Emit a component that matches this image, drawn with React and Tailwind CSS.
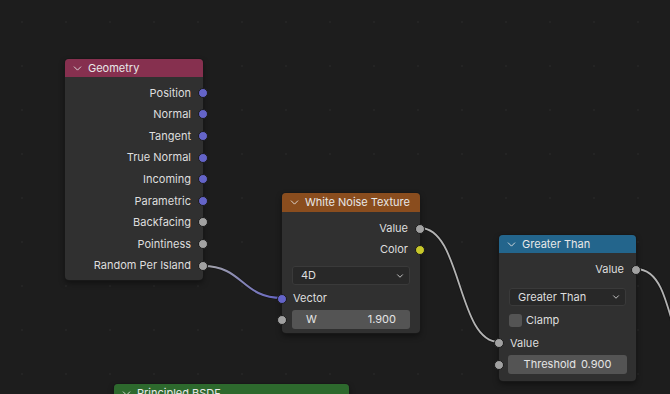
import { ChevronDown } from 'lucide-react'

const font = { fontFamily: 'Inter, "Noto Sans", sans-serif' }

const Socket = ({ side, color }) => (
  <span
    className={`absolute top-1/2 -translate-y-1/2 w-[10px] h-[10px] rounded-full border border-[#1a1a1a] ${side === 'right' ? 'right-[-5px]' : 'left-[-5px]'} ${color}`}
  />
)

const Row = ({ label, side = 'right', color = 'bg-[#a1a1a1]', h = 'h-[21.6px]' }) => (
  <div className={`relative flex items-center ${h} ${side === 'right' ? 'justify-end pr-[12px]' : 'justify-start pl-[11px]'}`}>
    <span>{label}</span>
    <Socket side={side} color={color} />
  </div>
)

const Header = ({ title, color }) => (
  <div className={`flex items-center gap-[4px] pl-[6px] rounded-t-[4px] text-[#e8e8e8] ${color}`}>
    <ChevronDown size={13} strokeWidth={1.6} className="text-[#e8e8e8]" />
    <span className="leading-none">{title}</span>
  </div>
)

const Dropdown = ({ value }) => (
  <div className="flex items-center justify-between h-full mx-[10px] pl-[8px] pr-[4px] rounded-[3px] bg-[#282828] border border-[#3a3a3a]">
    <span>{value}</span>
    <ChevronDown size={10} strokeWidth={2.2} className="text-[#cfcfcf]" />
  </div>
)

export default function App() {
  const purple = 'bg-[#6464c8]'
  const grey = 'bg-[#a1a1a1]'
  const yellow = 'bg-[#c7c72a]'

  return (
    <div
      className="relative w-[670px] h-[394px] overflow-hidden bg-[#1d1d1d] bg-[radial-gradient(circle,#242424_1px,transparent_1.5px)] bg-[size:44px_44px] text-[11px] text-[#dedede]"
      style={font}
    >
      <svg className="absolute inset-0" width="670" height="394">
        <defs>
          <linearGradient id="lk1" x1="203" y1="0" x2="282" y2="0" gradientUnits="userSpaceOnUse">
            <stop offset="0" stopColor="#a8a8a8" />
            <stop offset="1" stopColor="#6262c4" />
          </linearGradient>
        </defs>
        <g fill="none" strokeLinecap="round">
          <path d="M203 266 C 243 266, 242 298, 282 298" stroke="#151515" strokeWidth="3.5" />
          <path d="M203 266 C 243 266, 242 298, 282 298" stroke="url(#lk1)" strokeWidth="2" />
          <path d="M420 228 C 462 228, 457 342, 499 342" stroke="#151515" strokeWidth="3.5" />
          <path d="M420 228 C 462 228, 457 342, 499 342" stroke="#b3b3b3" strokeWidth="1.8" />
          <path d="M636 269 C 668 269, 668 320, 700 420" stroke="#151515" strokeWidth="3.5" />
          <path d="M636 269 C 668 269, 668 320, 700 420" stroke="#b3b3b3" strokeWidth="1.8" />
        </g>
      </svg>

      {/* Geometry */}
      <div className="absolute left-[65px] top-[59px] w-[138px] rounded-[4px] bg-[#303030] shadow-[0_0_0_1px_#181818,0_3px_6px_rgba(0,0,0,0.45)]">
        <div className="h-[18px] flex">
          <Header title="Geometry" color="bg-[#86304f] w-full" />
        </div>
        <div className="pt-[5px] pb-[4px]">
          <Row label="Position" color={purple} />
          <Row label="Normal" color={purple} />
          <Row label="Tangent" color={purple} />
          <Row label="True Normal" color={purple} />
          <Row label="Incoming" color={purple} />
          <Row label="Parametric" color={purple} />
          <Row label="Backfacing" color={grey} />
          <Row label="Pointiness" color={grey} />
          <Row label="Random Per Island" color={grey} />
        </div>
      </div>

      {/* White Noise Texture */}
      <div className="absolute left-[282px] top-[193px] w-[138px] rounded-[4px] bg-[#303030] shadow-[0_0_0_1px_#181818,0_3px_6px_rgba(0,0,0,0.45)]">
        <div className="h-[19px] flex">
          <Header title="White Noise Texture" color="bg-[#8a4d1e] w-full" />
        </div>
        <div className="pt-[6px] pb-[4px]">
          <Row label="Value" color={grey} h="h-[21px]" />
          <Row label="Color" color={yellow} h="h-[21px]" />
          <div className="h-[19px] mt-[6px]">
            <Dropdown value="4D" />
          </div>
          <div className="mt-[3px]">
            <Row label="Vector" side="left" color={purple} h="h-[21px]" />
          </div>
          <div className="relative h-[19px] mt-[1px]">
            <div className="flex items-center justify-between h-full mx-[10px] px-[14px] rounded-[3px] bg-[#545454] text-[#e4e4e4]">
              <span>W</span>
              <span>1.900</span>
            </div>
            <Socket side="left" color={grey} />
          </div>
        </div>
      </div>

      {/* Greater Than */}
      <div className="absolute left-[499px] top-[235px] w-[137px] rounded-[4px] bg-[#303030] shadow-[0_0_0_1px_#181818,0_3px_6px_rgba(0,0,0,0.45)]">
        <div className="h-[18px] flex">
          <Header title="Greater Than" color="bg-[#23658c] w-full" />
        </div>
        <div className="pt-[6px] pb-[7px]">
          <Row label="Value" color={grey} h="h-[21px]" />
          <div className="h-[18px] mt-[8px]">
            <Dropdown value="Greater Than" />
          </div>
          <div className="flex items-center gap-[4px] h-[18px] mt-[5px] pl-[10px]">
            <span className="w-[13px] h-[13px] rounded-[3px] bg-[#545454]" />
            <span>Clamp</span>
          </div>
          <div className="mt-[3px]">
            <Row label="Value" side="left" color={grey} h="h-[22px]" />
          </div>
          <div className="relative h-[19px] mt-[1px]">
            <div className="flex items-center justify-center gap-[5px] h-full mx-[9px] rounded-[3px] bg-[#545454] text-[#e4e4e4]">
              <span>Threshold</span>
              <span>0.900</span>
            </div>
            <Socket side="left" color={grey} />
          </div>
        </div>
      </div>

      {/* Principled BSDF */}
      <div className="absolute left-[114px] top-[384px] w-[235px] h-[60px] rounded-[4px] bg-[#303030] shadow-[0_0_0_1px_#181818,0_3px_6px_rgba(0,0,0,0.45)]">
        <div className="h-[18px] flex">
          <Header title="Principled BSDF" color="bg-[#2d692d] w-full" />
        </div>
      </div>
    </div>
  )
}
